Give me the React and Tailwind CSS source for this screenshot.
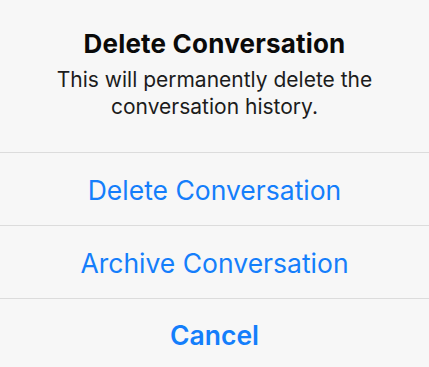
export default function App() {
  const font = { fontFamily: 'Inter, "Liberation Sans", Arial, sans-serif' };
  return (
    <div className="w-[429px] h-[367px] bg-[#f7f7f7] overflow-hidden flex flex-col" style={font}>
      <div className="h-[153px] flex flex-col items-center pt-[28px] border-b border-[#dcdcdc]">
        <div className="text-[26px] leading-[32px] font-bold text-[#0a0a0a] tracking-[0.2px]">Delete Conversation</div>
        <div className="mt-[6px] text-[21px] leading-[27px] text-[#1c1c1c] text-center">
          This will permanently delete the<br />conversation history.
        </div>
      </div>
      <div className="h-[73px] pt-[4px] flex items-center justify-center border-b border-[#dcdcdc] text-[26.5px] text-[#147efb]">
        Delete Conversation
      </div>
      <div className="h-[73px] pt-[4px] flex items-center justify-center border-b border-[#dcdcdc] text-[26.5px] text-[#147efb]">
        Archive Conversation
      </div>
      <div className="flex-1 pt-[5px] flex items-center justify-center text-[26.5px] font-semibold text-[#147efb]">
        Cancel
      </div>
    </div>
  );
}
